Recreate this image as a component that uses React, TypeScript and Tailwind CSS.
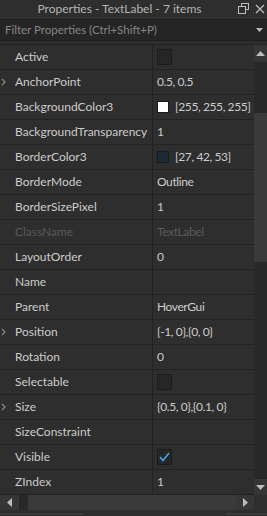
import React from "react";

type Row = {
  name: string;
  value?: string;
  kind?: "check" | "checked" | "color";
  swatch?: string;
  expand?: boolean;
  disabled?: boolean;
};

const rows: Row[] = [
  { name: "Active", kind: "check" },
  { name: "AnchorPoint", value: "0.5, 0.5", expand: true },
  { name: "BackgroundColor3", value: "[255, 255, 255]", kind: "color", swatch: "#ffffff" },
  { name: "BackgroundTransparency", value: "1" },
  { name: "BorderColor3", value: "[27, 42, 53]", kind: "color", swatch: "#1b2a35" },
  { name: "BorderMode", value: "Outline" },
  { name: "BorderSizePixel", value: "1" },
  { name: "ClassName", value: "TextLabel", disabled: true },
  { name: "LayoutOrder", value: "0" },
  { name: "Name", value: "" },
  { name: "Parent", value: "HoverGui" },
  { name: "Position", value: "{-1, 0},{0, 0}", expand: true },
  { name: "Rotation", value: "0" },
  { name: "Selectable", kind: "check" },
  { name: "Size", value: "{0.5, 0},{0.1, 0}", expand: true },
  { name: "SizeConstraint", value: "" },
  { name: "Visible", kind: "checked" },
  { name: "ZIndex", value: "1" },
];

const Chevron = () => (
  <svg width="5" height="8" viewBox="0 0 5 8" className="absolute left-[1px] top-[8px]">
    <path d="M1 1 L4 4 L1 7" stroke="#8a8a8a" strokeWidth="1.2" fill="none" />
  </svg>
);

const PropRow = ({ row }: { row: Row }) => {
  const text = row.disabled ? "text-[#5a5a5a]" : "text-[#cccccc]";
  return (
    <div className="flex h-[25px] border-b border-[#222222]">
      <div className={`relative flex w-[153px] shrink-0 items-center whitespace-nowrap border-r border-[#222222] pl-[15px] ${text}`}>
        {row.expand && <Chevron />}
        {row.name}
      </div>
      <div className={`flex flex-1 items-center whitespace-nowrap pl-[4px] tracking-[-0.4px] ${text}`}>
        {(row.kind === "check" || row.kind === "checked") && (
          <div className="flex h-[16px] w-[15px] items-center justify-center border border-[#1c1c1c] bg-[#262626]">
            {row.kind === "checked" && (
              <svg width="11" height="10" viewBox="0 0 11 10">
                <path d="M1 5 L4 8.5 L10 1" stroke="#3fa6f0" strokeWidth="1.6" fill="none" />
              </svg>
            )}
          </div>
        )}
        {row.kind === "color" && (
          <div
            className="mr-[6px] h-[12px] w-[12px] shrink-0 border border-[#1a1a1a]"
            style={{ backgroundColor: row.swatch }}
          />
        )}
        {row.value}
      </div>
    </div>
  );
};

export default function App() {
  return (
    <div
      className="flex h-[516px] w-[267px] flex-col overflow-hidden bg-[#2e2e2e] text-[12px]"
      style={{ fontFamily: "Lato, 'Open Sans', sans-serif" }}
    >
      {/* title bar */}
      <div className="relative flex h-[18px] items-center justify-center whitespace-nowrap text-[12px] text-[#b4b4b4]">
        <span className="-ml-[28px]">Properties - TextLabel - 7 items</span>
        <div className="absolute right-[2px] top-[3px] flex items-center gap-[6px]">
          <svg width="11" height="11" viewBox="0 0 11 11">
            <rect x="3.5" y="0.5" width="7" height="6" stroke="#bdbdbd" fill="none" />
            <rect x="0.5" y="3.5" width="7" height="7" stroke="#bdbdbd" fill="#2e2e2e" />
          </svg>
          <svg width="10" height="10" viewBox="0 0 10 10">
            <path d="M1 1 L9 9 M9 1 L1 9" stroke="#bdbdbd" strokeWidth="1.3" />
          </svg>
        </div>
      </div>

      {/* filter */}
      <div className="h-[26px] pt-[1px]">
        <div className="flex h-[22px] items-center justify-between whitespace-nowrap border-y border-[#1e1e1e] bg-[#252525] pl-[5px] pr-[4px] text-[11.5px] text-[#868686]">
          <span>Filter Properties (Ctrl+Shift+P)</span>
          <svg width="7" height="4" viewBox="0 0 7 4">
            <path d="M0 0 H7 L3.5 4 Z" fill="#bcbcbc" />
          </svg>
        </div>
      </div>

      {/* grid */}
      <div className="flex h-[451px] border-t border-[#222222]">
        <div className="w-[254px] shrink-0">
          {rows.map((r) => (
            <PropRow key={r.name} row={r} />
          ))}
        </div>
        <div className="flex w-[13px] flex-col bg-[#282828]">
          <div className="flex h-[17px] items-center justify-center bg-[#363636]">
            <svg width="9" height="5" viewBox="0 0 9 5">
              <path d="M0 5 L4.5 0 L9 5 Z" fill="#bdbdbd" />
            </svg>
          </div>
          <div className="mt-[51px] h-[149px] bg-[#3a3a3a]" />
          <div className="flex-1" />
          <div className="flex h-[16px] items-center justify-center bg-[#363636]">
            <svg width="9" height="5" viewBox="0 0 9 5">
              <path d="M0 0 L4.5 5 L9 0 Z" fill="#bdbdbd" />
            </svg>
          </div>
        </div>
      </div>

      {/* horizontal scrollbar */}
      <div className="flex h-[15px] bg-[#282828]">
        <div className="flex w-[19px] items-center justify-center bg-[#363636]">
          <svg width="5" height="9" viewBox="0 0 5 9">
            <path d="M5 0 L0 4.5 L5 9 Z" fill="#bdbdbd" />
          </svg>
        </div>
        <div className="ml-[9px] w-[208px] bg-[#3a3a3a]" />
        <div className="flex w-[18px] items-center justify-center bg-[#363636]">
          <svg width="5" height="9" viewBox="0 0 5 9">
            <path d="M0 0 L5 4.5 L0 9 Z" fill="#bdbdbd" />
          </svg>
        </div>
        <div className="flex-1 bg-[#2e2e2e]" />
      </div>

      {/* bottom strip */}
      <div className="flex flex-1 pt-[3px]">
        <div className="h-[2px] w-[83px] bg-[#3a3a3a]" />
        <div className="flex-1" />
        <div className="h-[2px] w-[41px] bg-[#3a3a3a]" />
      </div>
    </div>
  );
}
